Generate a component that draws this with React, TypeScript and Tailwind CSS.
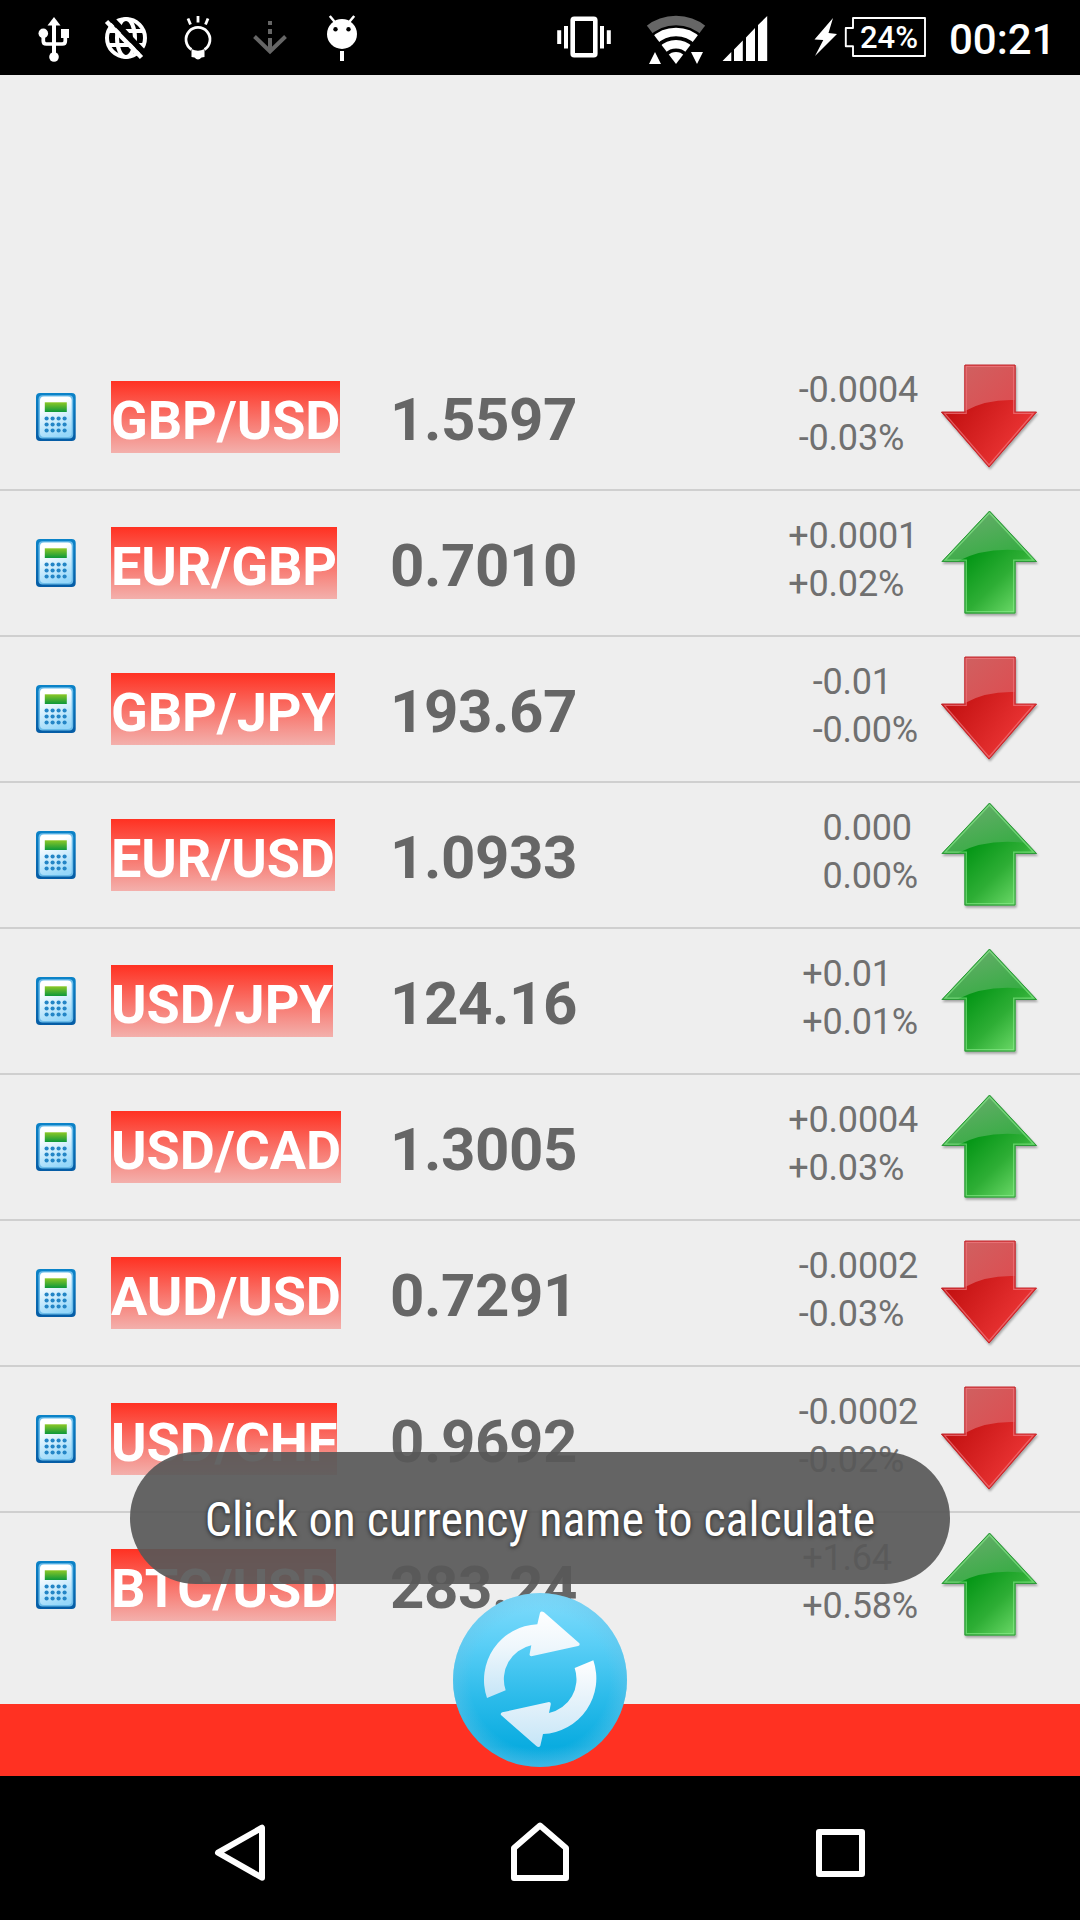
type Direction = "up" | "down";

type Quote = {
  pair: string;
  rate: string;
  change: string;
  percent: string;
  direction: Direction;
};

const quotes: Quote[] = [
  { pair: "GBP/USD", rate: "1.5597", change: "-0.0004", percent: "-0.03%", direction: "down" },
  { pair: "EUR/GBP", rate: "0.7010", change: "+0.0001", percent: "+0.02%", direction: "up" },
  { pair: "GBP/JPY", rate: "193.67", change: "-0.01", percent: "-0.00%", direction: "down" },
  { pair: "EUR/USD", rate: "1.0933", change: "0.000", percent: "0.00%", direction: "up" },
  { pair: "USD/JPY", rate: "124.16", change: "+0.01", percent: "+0.01%", direction: "up" },
  { pair: "USD/CAD", rate: "1.3005", change: "+0.0004", percent: "+0.03%", direction: "up" },
  { pair: "AUD/USD", rate: "0.7291", change: "-0.0002", percent: "-0.03%", direction: "down" },
  { pair: "USD/CHF", rate: "0.9692", change: "-0.0002", percent: "-0.02%", direction: "down" },
  { pair: "BTC/USD", rate: "283.24", change: "+1.64", percent: "+0.58%", direction: "up" },
];

const UsbIcon = () => (
  <svg className="w-[72px] h-[75px]" viewBox="0 0 72 75" fill="none">
    <path d="M36 17l6.5 8.5h-13z" fill="#fff" />
    <path d="M36 22v34" stroke="#fff" strokeWidth="4" />
    <path d="M25.3 34v7q0 3 3 3h16q3 0 3-3v-5" stroke="#fff" strokeWidth="3.7" />
    <circle cx="25.3" cy="33.4" r="4.8" fill="#fff" />
    <circle cx="36" cy="57" r="4.8" fill="#fff" />
    <path d="M43 29h8v9h-8z" fill="#fff" />
  </svg>
);

const GlobeOffIcon = () => (
  <svg className="w-[72px] h-[75px]" viewBox="0 0 72 75" fill="none">
    <g stroke="#fff" strokeWidth="4">
      <circle cx="36" cy="38" r="19" />
      <ellipse cx="36" cy="38" rx="9" ry="19" />
      <path d="M18 31h36M18 45h36" />
    </g>
    <path d="M19 16l38 40" stroke="#000" strokeWidth="6" />
    <path d="M16.5 21.5l35 36" stroke="#fff" strokeWidth="4.5" />
  </svg>
);

const BulbIcon = () => (
  <svg className="w-[72px] h-[75px]" viewBox="0 0 72 75" fill="none">
    <path d="M29.5 49.5a12 12 0 1 1 13 0" stroke="#fff" strokeWidth="2.8" />
    <path d="M29.5 49q6.500 3.500 13 0v8l-3 .5q-3.500 4-7 0l-3-.5z" fill="#fff" />
    <path d="M36 16v6.500M26 18.500l2.500 6M46 18.500l-2.500 6" stroke="#fff" strokeWidth="2.8" />
  </svg>
);

const DownloadIcon = () => (
  <svg className="w-[72px] h-[75px]" viewBox="0 0 72 75" fill="none">
    <path d="M36 21v4M36 29v5M36 38v12" stroke="#666" strokeWidth="4" />
    <path d="M20.500 36.500L36 51.500l15.500-15" stroke="#666" strokeWidth="4" />
  </svg>
);

const LollipopIcon = () => (
  <svg className="w-[72px] h-[75px]" viewBox="0 0 72 75" fill="none">
    <circle cx="36" cy="34" r="15" fill="#fff" />
    <path d="M23.800 16l5 6M48.200 16l-5 6" stroke="#fff" strokeWidth="2.500" />
    <circle cx="29.500" cy="29.300" r="2.200" fill="#000" />
    <circle cx="42.500" cy="29.300" r="2.200" fill="#000" />
    <path d="M36 51v10" stroke="#fff" strokeWidth="4" />
  </svg>
);

const VibrateIcon = () => (
  <svg className="w-[56px] h-[75px]" viewBox="556 0 56 75" fill="none">
    <rect x="572.700" y="18.800" width="22.600" height="36.400" rx="1.500" stroke="#fff" strokeWidth="4.600" />
    <path d="M566 26v22.500M602 26v22.500M559.200 30.300v13.700M608.800 30.300v13.700" stroke="#fff" strokeWidth="4" />
  </svg>
);

const WifiIcon = () => (
  <svg className="w-[60px] h-[75px]" viewBox="646 0 60 75" fill="none">
    <defs>
      <clipPath id="wifi-wedge">
        <path d="M676 64L640 16.500V0h72v16.500z" />
      </clipPath>
    </defs>
    <g clipPath="url(#wifi-wedge)">
      <circle cx="676" cy="63.500" r="43" stroke="#666" strokeWidth="9.500" />
      <circle cx="676" cy="63.500" r="31.500" stroke="#fff" strokeWidth="8.500" />
      <circle cx="676" cy="63.500" r="19.300" stroke="#fff" strokeWidth="8.500" />
      <circle cx="676" cy="63.500" r="11.500" fill="#fff" />
    </g>
    <path d="M655 52l6 12h-12zM691 52h12l-6 12z" fill="#fff" />
  </svg>
);

const SignalIcon = () => (
  <svg className="w-[46px] h-[75px]" viewBox="722 0 46 75">
    <path d="M722.500 61l8.800-9v9zM734 49.500l8.800-9V61H734zM746 37.500l9-9.500v33h-9zM758 25l9.200-9v45H758z" fill="#fff" />
  </svg>
);

const BoltIcon = () => (
  <svg className="w-[26px] h-[75px]" viewBox="812 0 26 75">
    <path d="M833 18l-18.500 21.500 8.800.5L815 56l22-22-8.500-1z" fill="#fff" />
  </svg>
);

const BatteryIcon = () => (
  <svg className="absolute inset-0 w-[82px] h-[75px]" viewBox="844 0 82 75" fill="none">
    <path d="M853 18h72v38h-72v-9.800h-7.200V28H853z" stroke="#fff" strokeWidth="1.900" strokeLinejoin="round" />
  </svg>
);

const StatusBar = () => (
  <header className="flex h-[75px] items-center bg-black pl-[18px] text-white">
    <UsbIcon />
    <GlobeOffIcon />
    <BulbIcon />
    <DownloadIcon />
    <LollipopIcon />
    <div className="ml-auto flex items-center pr-[29px]">
      <VibrateIcon />
      <div className="w-[34px]" />
      <WifiIcon />
      <div className="w-4" />
      <SignalIcon />
      <div className="w-[44px]" />
      <BoltIcon />
      <div className="relative ml-[6px] flex h-[75px] w-[82px] items-center pl-4 text-[31px] font-medium leading-none">
        <BatteryIcon />
        24%
      </div>
      <span className="ml-[23px] w-[102px] whitespace-nowrap pt-[5px] text-[42px] font-medium leading-none">00:21</span>
    </div>
  </header>
);

const CalculatorIcon = () => (
  <svg className="h-12 w-10 shrink-0" viewBox="0 0 40 48">
    <defs>
      <linearGradient id="calc-frame" x1="0" y1="0" x2="0" y2="1">
        <stop offset="0" stopColor="#0b83c8" />
        <stop offset="1" stopColor="#055ca5" />
      </linearGradient>
      <linearGradient id="calc-body" x1="0.300" y1="0" x2="0.600" y2="1">
        <stop offset="0.200" stopColor="#fff" />
        <stop offset="1" stopColor="#95d7fa" />
      </linearGradient>
      <linearGradient id="calc-screen" x1="0" y1="0" x2="0" y2="1">
        <stop offset="0" stopColor="#8cc826" />
        <stop offset="1" stopColor="#0c983b" />
      </linearGradient>
    </defs>
    <rect x="0" y="0" width="39.700" height="48" rx="4" fill="url(#calc-frame)" />
    <rect x="2.500" y="2.200" width="34.700" height="43.300" rx="4" fill="#6dbdea" />
    <rect x="4" y="3.500" width="31.700" height="40.500" rx="4" fill="url(#calc-body)" />
    <rect x="8.800" y="9.300" width="22" height="9.700" fill="url(#calc-screen)" />
    {[25.5, 31.5, 37.5].map((cy) =>
      [10.6, 16.6, 22.6, 28.6].map((cx) => <circle key={`${cx}-${cy}`} cx={cx} cy={cy} r="2.100" fill="#2385c6" />)
    )}
  </svg>
);

const DownArrow = () => (
  <svg className="h-[110px] w-[104px] drop-shadow-[1px_2px_1px_rgba(0,0,0,0.3)]" viewBox="0 0 104 110">
    <defs>
      <linearGradient id="down-fill" x1="0.150" y1="0.400" x2="0.800" y2="0.900">
        <stop offset="0" stopColor="#c41212" />
        <stop offset="1" stopColor="#ee3737" />
      </linearGradient>
      <linearGradient id="down-gloss" x1="0" y1="0" x2="1" y2="1">
        <stop offset="0" stopColor="#d06060" />
        <stop offset="1" stopColor="#de4c50" />
      </linearGradient>
    </defs>
    <path d="M27.500 3h51v47h21.500L52 105.500 4 50h23.500z" fill="url(#down-fill)" />
    <path d="M28 3.500h50v34.500Q49 37 28 49z" fill="url(#down-gloss)" />
    <path d="M28 3h50v47h21.500L52 105 4.500 50H28z" fill="none" stroke="#c3282e" />
    <path d="M29.200 4.300h47.500v47h19.500L52 103 7.500 51.300h21.700z" fill="none" stroke="#f07a80" strokeOpacity="0.700" strokeWidth="1.200" />
  </svg>
);

const UpArrow = () => (
  <svg className="h-[110px] w-[104px] drop-shadow-[1px_2px_1px_rgba(0,0,0,0.3)]" viewBox="0 0 104 110">
    <defs>
      <linearGradient id="up-fill" x1="0.300" y1="0.450" x2="0.800" y2="1">
        <stop offset="0" stopColor="#069717" />
        <stop offset="0.500" stopColor="#2eae35" />
        <stop offset="1" stopColor="#6fdb6b" />
      </linearGradient>
      <linearGradient id="up-gloss" x1="0.200" y1="0" x2="0.700" y2="1">
        <stop offset="0" stopColor="#68ad6c" />
        <stop offset="1" stopColor="#34ac41" />
      </linearGradient>
    </defs>
    <path d="M52.500 3L100 54H78.500v51.500h-51V54H4.500z" fill="url(#up-fill)" />
    <path d="M52.500 3.500l37 39.500Q49 38 20 53.500H5.500z" fill="url(#up-gloss)" />
    <path d="M52.500 3L99.500 53.500H78v51.500H28V53.500H5z" fill="none" stroke="#2c9a38" />
    <path d="M8 52.200L52.500 5l44 47.200H76.700v51.500H29.300V52.200z" fill="none" stroke="#8dec90" strokeOpacity="0.600" strokeWidth="1.300" />
  </svg>
);

const QuoteRow = ({ quote }: { quote: Quote }) => (
  <li className="flex h-[146px] items-center border-b-2 border-[#cfcfcf] pl-9 pr-[39px] last:border-transparent">
    <CalculatorIcon />
    <div className="ml-[35px] w-[279px]">
      <span className="inline-block h-[72px] whitespace-nowrap bg-linear-to-b/srgb from-[#ff3122] to-[#f3b0ac] pt-[7px] align-top text-[54px] font-bold leading-[65px] tracking-[-0.1px] text-white">
        {quote.pair}
      </span>
    </div>
    <span className="pt-[5px] text-[60px] font-bold leading-[72px] tracking-[-0.4px] text-[#666]">{quote.rate}</span>
    <div className="ml-auto pb-[6px] text-[36px] leading-[48px] tracking-[-0.2px] text-[#707070]">
      <p>{quote.change}</p>
      <p>{quote.percent}</p>
    </div>
    <div className="ml-[19px]">{quote.direction === "up" ? <UpArrow /> : <DownArrow />}</div>
  </li>
);

const swoosh =
  "M171 384A167 167 0 0 1 322 163L330 128Q334 121 342 127L448 220Q451 226 444 228L304 259Q297 258 299 251L304 226A104 104 0 0 0 227 361Z";

const RefreshButton = () => (
  <button className="absolute -top-[111px] left-[453px] size-[174px]" aria-label="Refresh">
    <svg className="size-full" viewBox="69 69 522 522">
      <defs>
        <linearGradient id="refresh-fill" x1="0" y1="0" x2="0" y2="1">
          <stop offset="0" stopColor="#82dcfc" />
          <stop offset="0.300" stopColor="#59cef6" />
          <stop offset="0.600" stopColor="#2cbbea" />
          <stop offset="0.880" stopColor="#0aace0" />
          <stop offset="1" stopColor="#1fb0e2" />
        </linearGradient>
        <radialGradient id="refresh-rim">
          <stop offset="0.800" stopColor="#6cc4e8" stopOpacity="0" />
          <stop offset="1" stopColor="#6cc4e8" stopOpacity="0.400" />
        </radialGradient>
        <linearGradient id="refresh-arrow" x1="0" y1="0" x2="0" y2="1">
          <stop offset="0" stopColor="#fff" />
          <stop offset="0.400" stopColor="#eff7fc" />
          <stop offset="1" stopColor="#c5e5f7" />
        </linearGradient>
        <linearGradient id="refresh-arrow-flip" x1="0" y1="1" x2="0" y2="0">
          <stop offset="0" stopColor="#fff" />
          <stop offset="0.400" stopColor="#e9f4fb" />
          <stop offset="1" stopColor="#c5e5f7" />
        </linearGradient>
      </defs>
      <circle cx="330" cy="330" r="261" fill="url(#refresh-fill)" />
      <circle cx="330" cy="330" r="261" fill="url(#refresh-rim)" />
      <path d={swoosh} fill="url(#refresh-arrow)" />
      <path d={swoosh} fill="url(#refresh-arrow-flip)" transform="rotate(180 330.500 327.500)" />
    </svg>
  </button>
);

const Toast = ({ message }: { message: string }) => (
  <div className="absolute left-[130px] top-[1452px] flex h-[132px] w-[820px] items-center justify-center rounded-full bg-[#585858]/92">
    <span className="whitespace-nowrap pt-1 text-[48px] leading-none tracking-[-0.06px] text-white [font-stretch:75%] [text-shadow:0_1px_4px_rgba(0,0,0,0.7)]">
      {message}
    </span>
  </div>
);

const NavBar = () => (
  <nav className="flex h-[144px] items-center justify-center gap-[228px] bg-black">
    <svg className="size-[72px]" viewBox="0 0 72 72" fill="none" stroke="#fff" strokeWidth="6" strokeLinejoin="round">
      <path d="M58 16v50L14 41z" transform="translate(0 -0.300)" />
    </svg>
    <svg className="size-[72px]" viewBox="0 0 72 72" fill="none" stroke="#fff" strokeWidth="6" strokeLinejoin="round">
      <path d="M36 13.500L10 36V66h52V36z" />
    </svg>
    <svg className="size-[72px]" viewBox="0 0 72 72" fill="none" stroke="#fff" strokeWidth="6" strokeLinejoin="round">
      <path d="M15 20h43v42H15z" />
    </svg>
  </nav>
);

export default function App() {
  return (
    <div className="relative flex h-[1920px] w-[1080px] flex-col overflow-hidden bg-[#eeeeee] font-[Roboto,sans-serif]">
      <StatusBar />
      <main className="flex-1 pt-[270px]">
        <ul>
          {quotes.map((quote) => (
            <QuoteRow key={quote.pair} quote={quote} />
          ))}
        </ul>
      </main>
      <footer className="relative h-[72px] bg-[#ff3122]">
        <RefreshButton />
      </footer>
      <NavBar />
      <Toast message="Click on currency name to calculate" />
    </div>
  );
}
